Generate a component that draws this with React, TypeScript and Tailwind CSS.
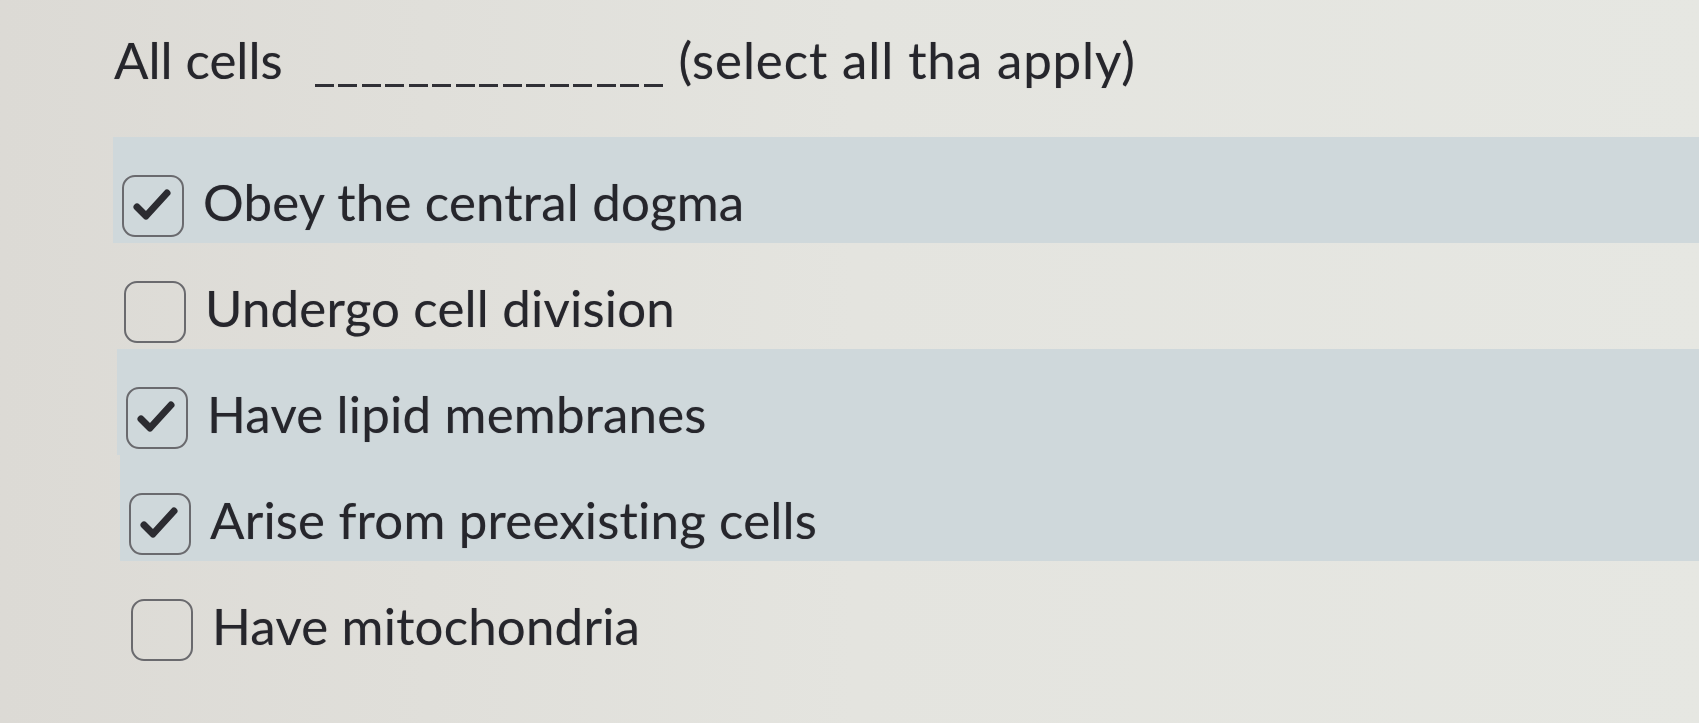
import React from "react";

type Opt = { label: string; checked: boolean; band: boolean; ml: string };

const options: Opt[] = [
  { label: "Obey the central dogma", checked: true, band: true, ml: "ml-[113px]" },
  { label: "Undergo cell division", checked: false, band: false, ml: "ml-[115px]" },
  { label: "Have lipid membranes", checked: true, band: true, ml: "ml-[117px]" },
  { label: "Arise from preexisting cells", checked: true, band: true, ml: "ml-[120px]" },
  { label: "Have mitochondria", checked: false, band: false, ml: "ml-[122px]" },
];

function Box({ checked }: { checked: boolean }) {
  return (
    <div className="mt-[38px] h-[62px] w-[62px] shrink-0 rounded-[13px] border-2 border-[#6a6a6e] bg-transparent">
      {checked && (
        <svg viewBox="0 0 58 58" className="h-full w-full">
          <polyline
            points="13,30 22,39 43,16"
            fill="none"
            stroke="#2c2c31"
            strokeWidth="7"
            strokeLinecap="round"
            strokeLinejoin="round"
          />
        </svg>
      )}
    </div>
  );
}

const dashes = Array.from({ length: 15 }, (_, i) => i);

export default function App() {
  return (
    <div
      className="h-[723px] w-full overflow-hidden bg-linear-to-r from-[#dcdad5] via-[#e4e4df] to-[#e6e7e2] text-[#26262c] [text-shadow:0_0_1px_rgba(0,0,0,0.35)]"
      style={{ fontFamily: "Lato, 'Open Sans', sans-serif" }}
    >
      <div className="flex items-start pl-[114px] pt-[30px] text-[51px] leading-[60px] whitespace-pre">
        <span>All cells</span>
        <div className="ml-[32px] mt-[54px] flex gap-[4.5px]">
          {dashes.map((d) => (
            <div key={d} className="h-[3px] w-[19px] bg-[#303036]" />
          ))}
        </div>
        <span className="ml-[16px] tracking-[0.9px]">(select all tha apply)</span>
      </div>
      <div className="mt-[47px] flex flex-col">
        {options.map((o) => (
          <div
            key={o.label}
            className={`flex h-[106px] items-start pl-[9px] ${o.ml} ${
              o.band ? "bg-[#cfd8db]" : "bg-transparent"
            }`}
          >
            <Box checked={o.checked} />
            <div className="ml-[19px] mt-[35px] text-[51px] leading-[60px] tracking-[0.2px] whitespace-nowrap">
              {o.label}
            </div>
          </div>
        ))}
      </div>
    </div>
  );
}
